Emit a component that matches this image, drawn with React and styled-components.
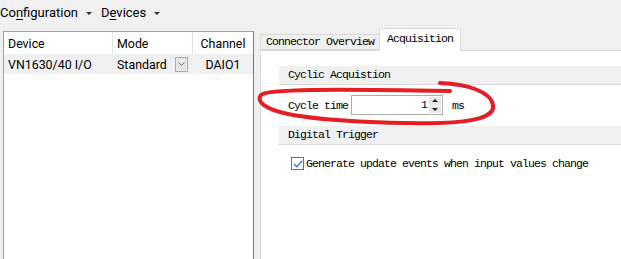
import React from "react";
import styled, { createGlobalStyle } from "styled-components";

const GlobalStyle = createGlobalStyle`
  html, body {
    margin: 0;
    padding: 0;
    background: #f0f0f0;
  }
  body {
    width: 621px;
    height: 259px;
    overflow: hidden;
  }
`;

const Window = styled.div`
  position: relative;
  width: 621px;
  height: 259px;
  display: flex;
  flex-direction: column;
  background: #f0f0f0;
  overflow: hidden;
  color: #000;
  font-family: Roboto, "Noto Sans", sans-serif;
`;

const MenuBar = styled.div`
  height: 25px;
  display: flex;
  align-items: center;
  gap: 9px;
  font-size: 13px;
`;

const MenuItem = styled.div`
  display: flex;
  align-items: center;
  gap: 8px;
  u {
    text-decoration-thickness: 1px;
    text-underline-offset: 2px;
  }
`;

const Caret = styled.span`
  width: 0;
  height: 0;
  margin-top: 2px;
  border-left: 3px solid transparent;
  border-right: 3px solid transparent;
  border-top: 3px solid #333;
`;

const Main = styled.div`
  flex: 1;
  display: flex;
  align-items: stretch;
`;

const ListBox = styled.div`
  width: 249px;
  margin: 6px 0 0 3px;
  background: #fff;
  border-left: 1px solid #a0a0a0;
  border-top: 1px solid #a0a0a0;
  border-right: 1px solid #7a7a7a;
  font-size: 12.4px;
`;

const Row = styled.div`
  display: grid;
  grid-template-columns: 109px 80px 60px;
  height: ${(p) => (p.$header ? 22 : 20)}px;
  background: ${(p) => (p.$header ? "#fff" : "#f0f0f0")};
`;

const Cell = styled.div`
  display: flex;
  align-items: center;
  justify-content: ${(p) => (p.$center ? "center" : "space-between")};
  padding-left: ${(p) => (p.$center ? 0 : 4)}px;
  border-right: ${(p) => (p.$divider ? "1px solid #e5e5e5" : "none")};
  white-space: nowrap;
`;

const ComboButton = styled.span`
  width: 11px;
  height: 13px;
  margin-right: 5px;
  display: flex;
  align-items: center;
  justify-content: center;
  border: 1px solid #adadad;
  background: #e6e6e6;
`;

const RightPane = styled.div`
  flex: 1;
  display: flex;
  flex-direction: column;
  margin: 5px 0 0 6px;
  font-family: "Liberation Mono", "DejaVu Sans Mono", monospace;
  font-size: 11.5px;
  letter-spacing: -0.9px;
`;

const TabStrip = styled.div`
  height: 20px;
  display: flex;
  align-items: flex-end;
`;

const Tab = styled.div`
  position: relative;
  height: ${(p) => (p.$active ? 19 : 14)}px;
  margin-bottom: ${(p) => (p.$active ? -1 : 0)}px;
  padding: ${(p) => (p.$active ? "3px 7px 0 7px" : "0 5px")};
  line-height: 14px;
  background: ${(p) => (p.$active ? "#fff" : "#f0f0f0")};
  border: 1px solid #d9d9d9;
  border-bottom: ${(p) => (p.$active ? "none" : "1px solid #d9d9d9")};
  margin-left: ${(p) => (p.$active ? -1 : 0)}px;
  z-index: ${(p) => (p.$active ? 1 : 0)};
  white-space: nowrap;
`;

const TabPanel = styled.div`
  flex: 1;
  background: #fff;
  border-top: 1px solid #d9d9d9;
  border-left: 1px solid #d9d9d9;
  padding: 15px 0 0 18px;
`;

const Band = styled.div`
  height: 18px;
  line-height: 18px;
  padding-left: 9px;
  background: #f0f0f0;
  border-bottom: 1px solid #dcdcdc;
`;

const FieldRow = styled.div`
  display: flex;
  align-items: center;
  height: 20px;
  margin: 10px 0 11px 9px;
`;

const SpinBox = styled.div`
  width: 90px;
  height: 18px;
  margin-left: 3px;
  display: flex;
  align-items: stretch;
  border: 1px solid #acacac;
  background: #fff;
`;

const SpinValue = styled.div`
  flex: 1;
  text-align: right;
  line-height: 18px;
  padding-right: 2px;
`;

const SpinButtons = styled.div`
  width: 12px;
  margin: 1px 1px 1px 0;
  display: flex;
  flex-direction: column;
  gap: 1px;
`;

const SpinButton = styled.div`
  flex: 1;
  display: flex;
  align-items: center;
  justify-content: center;
  background: #e6e6e6;
`;

const Arrow = styled.span`
  width: 0;
  height: 0;
  border-left: 3px solid transparent;
  border-right: 3px solid transparent;
  ${(p) =>
    p.$up ? "border-bottom: 3px solid #222;" : "border-top: 3px solid #222;"}
`;

const Unit = styled.span`
  margin-left: 9px;
`;

const CheckRow = styled.label`
  display: flex;
  align-items: center;
  gap: 2px;
  margin: 12px 0 0 12px;
  height: 13px;
`;

const CheckBox = styled.span`
  width: 11px;
  height: 11px;
  display: flex;
  align-items: center;
  justify-content: center;
  border: 1px solid #2b7cd3;
  background: #fff;
`;

const Annotation = styled.svg`
  position: absolute;
  left: 0;
  top: 0;
  pointer-events: none;
`;

export default function App() {
  return (
    <Window>
      <GlobalStyle />
      <MenuBar>
        <MenuItem>
          <span>
            Co<u>n</u>figuration
          </span>
          <Caret />
        </MenuItem>
        <MenuItem>
          <span>
            D<u>e</u>vices
          </span>
          <Caret />
        </MenuItem>
      </MenuBar>
      <Main>
        <ListBox>
          <Row $header>
            <Cell $divider>Device</Cell>
            <Cell $divider>Mode</Cell>
            <Cell $center>Channel</Cell>
          </Row>
          <Row>
            <Cell>VN1630/40 I/O</Cell>
            <Cell>
              Standard
              <ComboButton>
                <svg width="7" height="4" viewBox="0 0 7 4">
                  <path d="M0.5 0.5 L3.5 3.5 L6.5 0.5" fill="none" stroke="#777" strokeWidth="1" />
                </svg>
              </ComboButton>
            </Cell>
            <Cell $center>DAIO1</Cell>
          </Row>
        </ListBox>
        <RightPane>
          <TabStrip>
            <Tab>Connector Overview</Tab>
            <Tab $active>Acquisition</Tab>
          </TabStrip>
          <TabPanel>
            <Band>Cyclic Acquistion</Band>
            <FieldRow>
              <span>Cycle time</span>
              <SpinBox>
                <SpinValue>1</SpinValue>
                <SpinButtons>
                  <SpinButton>
                    <Arrow $up />
                  </SpinButton>
                  <SpinButton>
                    <Arrow />
                  </SpinButton>
                </SpinButtons>
              </SpinBox>
              <Unit>ms</Unit>
            </FieldRow>
            <Band>Digital Trigger</Band>
            <CheckRow>
              <CheckBox>
                <svg width="10" height="8" viewBox="0 0 10 8">
                  <path d="M1 4 L3.8 6.8 L9 1" fill="none" stroke="#2b7cd3" strokeWidth="1.3" />
                </svg>
              </CheckBox>
              <span>Generate update events when input values change</span>
            </CheckRow>
          </TabPanel>
        </RightPane>
      </Main>
      <Annotation width="621" height="259" viewBox="0 0 621 259">
        <path
          d="M440 83 C468 84 491 92 493 105 C495 117 474 122 440 123 C392 124 322 121 288 114 C264 109 256 101 261 95 C266 89 330 89 450 91"
          fill="none"
          stroke="#e41e24"
          strokeWidth="4"
          strokeLinecap="round"
          strokeLinejoin="round"
        />
      </Annotation>
    </Window>
  );
}
